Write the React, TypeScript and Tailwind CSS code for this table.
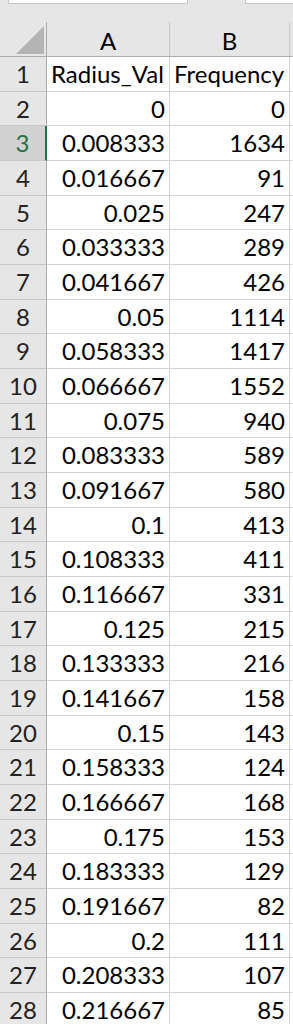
import React from 'react';

const rows: [string, string][] = [
    ['Radius_Val', 'Frequency'],
    ['0', '0'],
    ['0.008333', '1634'],
    ['0.016667', '91'],
    ['0.025', '247'],
    ['0.033333', '289'],
    ['0.041667', '426'],
    ['0.05', '1114'],
    ['0.058333', '1417'],
    ['0.066667', '1552'],
    ['0.075', '940'],
    ['0.083333', '589'],
    ['0.091667', '580'],
    ['0.1', '413'],
    ['0.108333', '411'],
    ['0.116667', '331'],
    ['0.125', '215'],
    ['0.133333', '216'],
    ['0.141667', '158'],
    ['0.15', '143'],
    ['0.158333', '124'],
    ['0.166667', '168'],
    ['0.175', '153'],
    ['0.183333', '129'],
    ['0.191667', '82'],
    ['0.2', '111'],
    ['0.208333', '107'],
    ['0.216667', '85'],
];

const App: React.FC = () => {
    return (
        <div className="w-[293px] h-[1024px] overflow-hidden bg-white text-black text-[24px] leading-none" style={{ fontFamily: 'Lato, "Open Sans", sans-serif' }}>
            {/* name box / formula bar strip */}
            <div className="h-[22px] bg-[#e6e6e6] flex items-start">
                <div className="ml-[8px] w-[180px] h-[4px] bg-white border-b border-x border-[#c6c6c6]" />
                <div className="ml-[57px] flex-1 h-[4px] bg-white border-b border-l border-[#c6c6c6]" />
            </div>

            {/* column headers */}
            <div className="grid grid-cols-[47px_123px_120px_1fr] h-[35px] bg-[#e6e6e6] border-b border-[#ababab]">
                <div className="relative border-r border-[#ababab]">
                    <div className="absolute right-[2px] bottom-[2px] w-0 h-0 border-l-[28px] border-l-transparent border-b-[28px] border-b-[#b4b4b4]" />
                </div>
                <div className="flex items-center justify-center border-r border-[#c8c8c8] pt-[3px]">A</div>
                <div className="flex items-center justify-center border-r border-[#c8c8c8] pt-[3px]">B</div>
                <div />
            </div>

            {/* data rows */}
            {rows.map(([a, b], i) => {
                const n = i + 1;
                const selected = n === 3;
                return (
                    <div key={n} className="grid grid-cols-[47px_123px_120px_1fr] h-[34.68px]">
                        <div
                            className={
                                selected
                                    ? 'flex items-center justify-center bg-[#d2d2d2] text-[#217346] border-b border-[#c8c8c8] border-r-2 border-r-[#217346]'
                                    : 'flex items-center justify-center bg-[#e6e6e6] text-[#222] border-b border-[#c8c8c8] border-r border-r-[#ababab]'
                            }
                        >
                            {n}
                        </div>
                        <div className={`flex items-center border-b border-r border-[#d4d4d4] px-[4px] whitespace-nowrap overflow-hidden ${n === 1 ? 'justify-start' : 'justify-end'}`}>
                            {a}
                        </div>
                        <div className={`flex items-center border-b border-r border-[#d4d4d4] px-[4px] whitespace-nowrap overflow-hidden ${n === 1 ? 'justify-start' : 'justify-end'}`}>
                            {b}
                        </div>
                        <div className="border-b border-[#d4d4d4]" />
                    </div>
                );
            })}
        </div>
    );
};

export default App;
